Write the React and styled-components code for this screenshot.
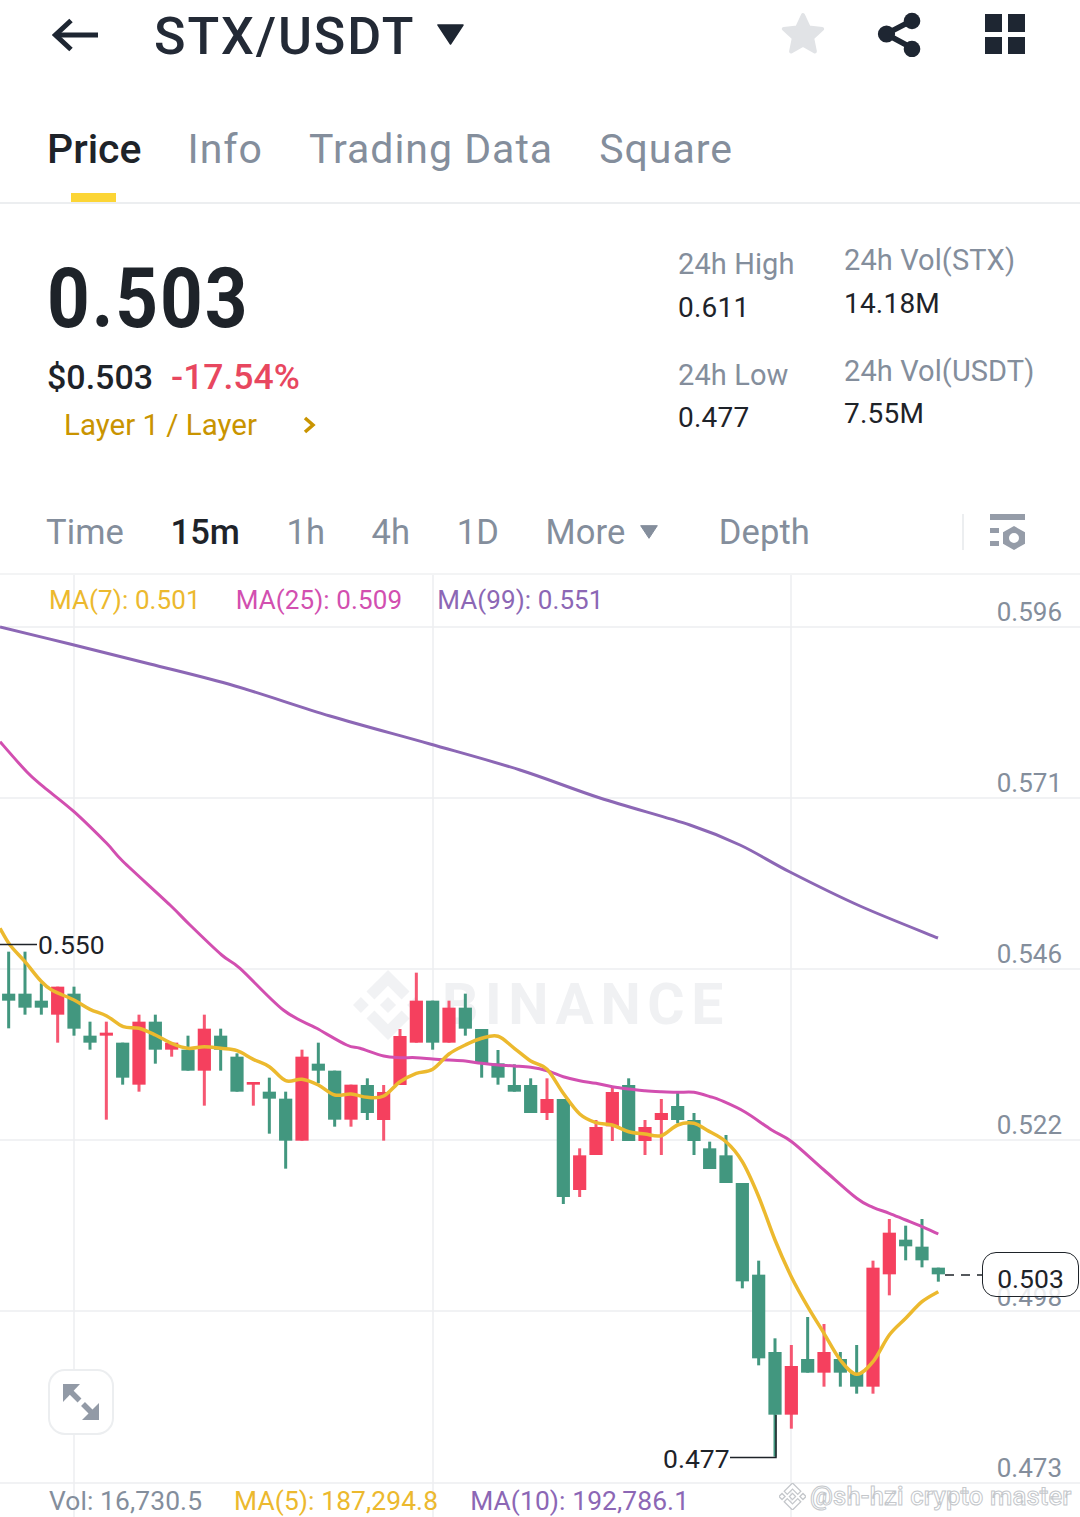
import React from "react";
import styled, { createGlobalStyle } from "styled-components";

const DARK = "#1e2329";
const GRAY = "#848e9c";
const LINE = "#eceef0";
const GREEN = "#42977f";
const RED = "#f5405e";
const YELLOW = "#ecb92e";
const PINK = "#d24fb0";
const PURPLE = "#8c67b5";
const FONT = `Roboto, "Noto Sans", sans-serif`;

const Global = createGlobalStyle`
  html, body { margin: 0; padding: 0; background: #fff; }
  body { font-family: ${FONT}; color: ${DARK}; }
  #root { width: 1080px; height: 1517px; overflow: hidden; }
`;

const Page = styled.div`
  width: 1080px;
  height: 1517px;
  display: flex;
  flex-direction: column;
  overflow: hidden;
  background: #fff;
`;

/* ---------- header ---------- */
const Header = styled.header`
  height: 72px;
  display: flex;
  align-items: center;
  padding: 0 55px 4px 52px;
  box-sizing: border-box;
`;
const Title = styled.h1`
  margin: 6px 0 0 56px;
  font-size: 52px;
  line-height: 66px;
  font-weight: 500;
  letter-spacing: 1.9px;
  color: #232a36;
`;
const HeaderIcons = styled.div`
  margin-left: auto;
  display: flex;
  align-items: center;
  gap: 51px;
`;
const Svg = styled.svg`
  display: block;
  flex: none;
`;
const BackIcon = styled(Svg)`
  margin-top: 2px;
`;
const GridIcon = styled(Svg)`
  margin-left: 13px;
`;
const TitleCaret = styled.span`
  margin: 0 0 0 22px;
`;

/* ---------- tabs ---------- */
const Tabs = styled.nav`
  height: 132px;
  display: flex;
  gap: 46px;
  padding: 0 0 0 47px;
  border-bottom: 2px solid ${LINE};
  box-sizing: border-box;
`;
const Tab = styled.a`
  position: relative;
  padding-top: 50px;
  font-size: 41px;
  line-height: 54px;
  font-weight: ${(p) => (p.$active ? 500 : 400)};
  letter-spacing: ${(p) => (p.$active ? 0 : 1)}px;
  color: ${(p) => (p.$active ? DARK : GRAY)};
  &::after {
    content: "";
    display: ${(p) => (p.$active ? "block" : "none")};
    position: absolute;
    left: 24px;
    bottom: 0;
    width: 45px;
    height: 9px;
    background: #fcd535;
  }
`;

/* ---------- stats ---------- */
const Stats = styled.section`
  height: 286px;
  display: flex;
  padding: 0 0 0 47px;
  box-sizing: border-box;
`;
const PriceBlock = styled.div`
  width: 631px;
  flex: none;
  display: flex;
  flex-direction: column;
`;
const BigPrice = styled.div`
  margin-top: 49px;
  font-size: 84px;
  line-height: 92px;
  font-weight: 700;
  letter-spacing: 2.2px;
  color: ${DARK};
  transform: scaleX(0.888);
  transform-origin: left center;
`;
const SubPrice = styled.div`
  margin-top: 10px;
  display: flex;
  align-items: baseline;
  gap: 18px;
  font-size: 35.5px;
  line-height: 44px;
  font-weight: 500;
`;
const Fiat = styled.span`
  color: ${DARK};
  font-size: 34px;
`;
const Change = styled.span`
  color: #e8475f;
`;
const LayerLink = styled.div`
  margin: 7px 0 0 17px;
  display: flex;
  align-items: center;
  gap: 45px;
  font-size: 29.5px;
  line-height: 38px;
  color: #c99400;
`;
const StatColumns = styled.div`
  display: flex;
`;
const StatColumn = styled.div`
  width: ${(p) => p.$w}px;
  padding-top: ${(p) => p.$top}px;
  display: flex;
  flex-direction: column;
  gap: 31px;
`;
const Stat = styled.div`
  display: flex;
  flex-direction: column;
  gap: 6.5px;
`;
const StatLabel = styled.span`
  font-size: 29px;
  line-height: 37px;
  color: ${GRAY};
  letter-spacing: 0.1px;
`;
const StatValue = styled.span`
  font-size: 28px;
  line-height: 36px;
  color: ${DARK};
  letter-spacing: 0.2px;
`;

/* ---------- interval row ---------- */
const Intervals = styled.div`
  height: 85px;
  display: flex;
  align-items: center;
  gap: 46.5px;
  padding: 1px 54px 0 46px;
  box-sizing: border-box;
  border-bottom: 2px solid #f3f4f5;
`;
const Interval = styled.span`
  font-size: 34.5px;
  line-height: 44px;
  font-weight: ${(p) => (p.$active ? 500 : 400)};
  color: ${(p) => (p.$active ? DARK : GRAY)};
  letter-spacing: 0.1px;
`;
const MoreGroup = styled.span`
  display: flex;
  align-items: center;
  gap: 14px;
  margin-right: 13px;
`;
const RowEnd = styled.div`
  margin-left: auto;
  display: flex;
  align-items: center;
  gap: 26px;
`;
const Divider = styled.span`
  width: 2px;
  height: 36px;
  background: ${LINE};
`;

/* ---------- chart ---------- */
const Chart = styled.section`
  position: relative;
  flex: 1;
  display: flex;
  flex-direction: column;
  justify-content: space-between;
  overflow: hidden;
`;
const ChartCanvas = styled.svg`
  position: absolute;
  left: 0;
  top: 0;
`;
const Legend = styled.div`
  position: relative;
  height: 50px;
  display: flex;
  align-items: center;
  gap: 35px;
  padding-left: 49px;
  font-size: 26px;
  letter-spacing: 0.1px;
`;
const VolumeLegend = styled(Legend)`
  height: 32px;
  gap: 32px;
  font-size: 26.4px;
`;
const LegendItem = styled.span`
  color: ${(p) => p.$color};
`;
const AxisLabel = styled.span`
  position: absolute;
  right: 18px;
  top: ${(p) => p.$top}px;
  font-size: 26px;
  line-height: 32px;
  color: ${GRAY};
`;
const PriceTag = styled.div`
  position: absolute;
  left: 982px;
  top: 677px;
  width: 97px;
  height: 45px;
  box-sizing: border-box;
  border: 1.5px solid ${DARK};
  border-radius: 14px;
  background: rgba(255, 255, 255, 0.82);
  text-align: center;
  font-size: 26.5px;
  line-height: 51px;
  color: ${DARK};
`;
const ExtremeLabel = styled.span`
  position: absolute;
  left: ${(p) => p.$left}px;
  top: ${(p) => p.$top}px;
  font-size: 26.5px;
  line-height: 32px;
  color: ${DARK};
`;
const ExpandButton = styled.button`
  position: absolute;
  left: 48px;
  top: 794px;
  width: 66px;
  height: 66px;
  padding: 0;
  box-sizing: border-box;
  display: flex;
  align-items: center;
  justify-content: center;
  background: #fff;
  border: 2px solid ${LINE};
  border-radius: 17px;
`;
const WatermarkLogo = styled.svg`
  position: absolute;
  left: 353px;
  top: 395px;
`;
const WatermarkText = styled.span`
  position: absolute;
  left: 442px;
  top: 395px;
  font-size: 57px;
  line-height: 70px;
  font-weight: 700;
  letter-spacing: 6.6px;
  color: #f0f1f3;
`;
const CreditLogo = styled.svg`
  position: absolute;
  left: 779px;
  top: 908px;
`;
const CreditText = styled.span`
  position: absolute;
  left: 810px;
  top: 907px;
  font-size: 25.5px;
  line-height: 28px;
  font-weight: 500;
  letter-spacing: 0.2px;
  color: #fff;
  -webkit-text-stroke: 1px #c4c7cb;
  white-space: nowrap;
`;

/* ---------- chart data (page coordinates) ---------- */
const g = "g";
const r = "r";
const from = (ox, oy, rows) =>
  rows.map(([c, u, wt, wb, bt, bb]) => ({
    c,
    x: ox + u / 3,
    wt: oy + wt / 3,
    wb: oy + wb / 3,
    bt: oy + bt / 3,
    bb: oy + bb / 3,
  }));

const candles = [
  ...from(0, 920, [
    [g, 26, 95, 325, 221, 242],
    [g, 75, 95, 284, 221, 263],
    [g, 124, 190, 284, 242, 263],
    [r, 173, 200, 368, 200, 284],
    [g, 222, 200, 347, 221, 326],
    [g, 270, 305, 389, 347, 368],
    [r, 319, 305, 599, 338, 347],
    [g, 368, 368, 494, 368, 473],
    [r, 417, 284, 515, 305, 494],
    [g, 466, 284, 431, 305, 389],
    [r, 515, 368, 410, 368, 389],
    [g, 564, 347, 452, 389, 452],
    [r, 613, 284, 557, 326, 452],
    [g, 662, 326, 452, 347, 389],
    [g, 711, 400, 515, 410, 515],
    [r, 760, 486, 557, 486, 494],
    [g, 808, 473, 641, 515, 536],
    [g, 857, 515, 746, 536, 662],
    [r, 906, 389, 662, 410, 662],
    [g, 955, 368, 490, 431, 452],
    [g, 1004, 452, 620, 452, 599],
    [r, 1053, 494, 620, 494, 599],
  ]),
  ...from(360, 960, [
    [g, 22, 355, 480, 375, 459],
    [r, 71, 375, 542, 396, 480],
    [r, 120, 207, 375, 228, 375],
    [r, 169, 38, 248, 122, 248],
    [g, 218, 122, 269, 122, 248],
    [r, 267, 122, 248, 143, 248],
    [g, 316, 101, 227, 143, 206],
    [g, 365, 207, 353, 207, 310],
    [g, 414, 270, 374, 310, 353],
    [g, 463, 313, 395, 375, 395],
    [g, 512, 355, 459, 375, 459],
    [r, 561, 355, 480, 417, 459],
    [g, 610, 417, 732, 417, 711],
    [r, 659, 565, 711, 586, 690],
    [r, 708, 480, 585, 501, 585],
    [r, 757, 380, 543, 396, 499],
    [g, 806, 355, 543, 375, 543],
    [r, 855, 480, 585, 501, 543],
    [r, 904, 417, 585, 459, 480],
    [g, 953, 396, 490, 438, 480],
    [g, 1002, 459, 585, 480, 543],
  ]),
  ...from(700, 1130, [
    [g, 29, 35, 117, 55, 117],
    [g, 78, 15, 159, 76, 159],
    [g, 127, 159, 475, 159, 454],
    [g, 176, 392, 706, 434, 685],
    [g, 225, 625, 980, 666, 854],
    [r, 274, 645, 896, 708, 854],
    [g, 323, 561, 728, 687, 728],
    [r, 372, 582, 770, 666, 728],
    [g, 421, 666, 770, 687, 728],
    [g, 470, 645, 791, 729, 770],
    [r, 519, 392, 791, 413, 770],
    [r, 568, 267, 496, 308, 433],
    [g, 617, 287, 391, 329, 349],
    [g, 666, 267, 412, 350, 391],
    [g, 715, 413, 455, 413, 433],
  ]),
];

const pts = (ox, oy, rows) => rows.map(([u, v]) => [ox + u / 3, oy + v / 3]);

const ma7 = [
  ...pts(0, 920, [
    [0, 25], [30, 75], [75, 125], [120, 180], [155, 210], [222, 240], [270, 268], [320, 288],
    [370, 320], [417, 325], [466, 345], [515, 370], [564, 385], [613, 380], [662, 385], [711, 392],
    [760, 418], [808, 440], [857, 482], [906, 478], [955, 495], [1004, 525], [1053, 522],
  ]),
  ...pts(360, 960, [
    [22, 412], [71, 408], [120, 365], [169, 340], [218, 328], [267, 282], [316, 255], [365, 235],
    [414, 229], [463, 265], [512, 303], [561, 328], [610, 400], [659, 462], [708, 488], [757, 495],
    [806, 515], [855, 522], [904, 527], [953, 495], [1002, 490],
  ]),
  ...pts(700, 1130, [
    [20, 0], [78, 35], [127, 95], [176, 200], [225, 330], [274, 440], [323, 530], [372, 610],
    [421, 690], [470, 733], [519, 695], [568, 615], [617, 565], [666, 515], [715, 485],
  ]),
];

const ma25 = [
  ...pts(0, 730, [
    [0, 35], [80, 125], [130, 170], [222, 245], [320, 340], [370, 395], [510, 525], [570, 585], [665, 675],
  ]),
  ...pts(0, 920, [[720, 145], [850, 270], [950, 325], [1040, 375]]),
  ...pts(360, 960, [
    [0, 265], [71, 288], [120, 293], [169, 293], [218, 297], [267, 300], [316, 303], [365, 310],
    [414, 315], [463, 318], [512, 322], [561, 332], [610, 350], [659, 362], [708, 370], [757, 380],
    [806, 387], [855, 392], [904, 395], [953, 397], [1002, 397], [1051, 410], [1080, 420],
  ]),
  [745, 1112],
  ...pts(700, 1130, [[215, 0], [275, 35], [372, 120], [470, 205], [519, 232], [568, 250], [617, 270], [666, 290], [715, 312]]),
];

const ma99 = [
  [0, 627], [70, 644], [150, 664], [235, 686], [330, 716], [430, 744], [520, 770], [600, 798],
  [690, 825], [740, 845], [790, 872], [860, 906], [938, 938],
];

const CHART_TOP = 575;
const smooth = (p) => {
  let d = `M${p[0][0]} ${p[0][1] - CHART_TOP}`;
  for (let i = 0; i < p.length - 1; i++) {
    const a = p[Math.max(i - 1, 0)];
    const b = p[i];
    const c = p[i + 1];
    const e = p[Math.min(i + 2, p.length - 1)];
    const c1x = b[0] + (c[0] - a[0]) / 6;
    const c1y = b[1] + (c[1] - a[1]) / 6 - CHART_TOP;
    const c2x = c[0] - (e[0] - b[0]) / 6;
    const c2y = c[1] - (e[1] - b[1]) / 6 - CHART_TOP;
    d += `C${c1x.toFixed(1)} ${c1y.toFixed(1)} ${c2x.toFixed(1)} ${c2y.toFixed(1)} ${c[0].toFixed(1)} ${(c[1] - CHART_TOP).toFixed(1)}`;
  }
  return d;
};

const BINANCE_MARK =
  "M38.73 53.2l24.59-24.58 24.6 24.6 14.3-14.31L63.32 0 24.42 38.9zM0 63.31l14.3-14.31 14.31 14.31-14.31 14.3zM38.73 73.41l24.59 24.59 24.6-24.6 14.31 14.29-38.9 38.91-38.91-38.88-.02-.02zM98 63.31l14.3-14.31 14.31 14.3-14.31 14.32zM77.83 63.3L63.32 48.78 52.59 59.51l-1.24 1.23-2.54 2.54 14.51 14.5 14.51-14.47z";

const gridY = [627, 798, 969, 1140, 1311, 1483];
const gridX = [74, 433, 791];
const axis = [
  ["0.596", 612],
  ["0.571", 783],
  ["0.546", 954],
  ["0.522", 1125],
  ["0.498", 1297],
  ["0.473", 1468],
];

const Caret = ({ w, h, fill }) => (
  <svg width={w} height={h} viewBox="0 0 27 21" style={{ display: "block" }}>
    <path d="M1 1h25L13.500 20z" fill={fill} stroke={fill} strokeLinejoin="round" strokeWidth="1.500" />
  </svg>
);

export default function App() {
  return (
    <Page>
      <Global />
      <Header>
        <BackIcon width="46" height="34" viewBox="0 0 46 34" fill="none" stroke="#1e2632" strokeWidth="5">
          <path d="M46 17H4" />
          <path d="M19 2.500L3.500 17 19 31.500" />
        </BackIcon>
        <Title>STX/USDT</Title>
        <TitleCaret>
          <Caret w={27} h={21} fill="#1e2632" />
        </TitleCaret>
        <HeaderIcons>
          <Svg width="46" height="46" viewBox="0 0 46 46">
            <path
              d="M23 4l5.700 12.400 13.500 1.500-10 9.200 2.700 13.400L23 33.800l-11.900 6.700 2.700-13.400-10-9.200 13.500-1.500z"
              fill="#e1e3e6"
              stroke="#e1e3e6"
              strokeWidth="4"
              strokeLinejoin="round"
            />
          </Svg>
          <Svg width="44" height="46" viewBox="0 0 44 46" fill="#1e2632" stroke="#1e2632">
            <path d="M35 9.500L9 23l26 14" fill="none" strokeWidth="5.500" />
            <circle cx="35" cy="10" r="8.300" stroke="none" />
            <circle cx="9.500" cy="23" r="8.600" stroke="none" />
            <circle cx="35" cy="38" r="8.300" stroke="none" />
          </Svg>
          <GridIcon width="40" height="40" viewBox="0 0 40 40" fill="#1e2632">
            <rect x="0" y="0" width="17" height="18" />
            <rect x="23" y="0" width="17" height="18" />
            <rect x="0" y="23" width="17" height="17" />
            <rect x="23" y="23" width="17" height="17" />
          </GridIcon>
        </HeaderIcons>
      </Header>

      <Tabs>
        <Tab $active>Price</Tab>
        <Tab>Info</Tab>
        <Tab>Trading Data</Tab>
        <Tab>Square</Tab>
      </Tabs>

      <Stats>
        <PriceBlock>
          <BigPrice>0.503</BigPrice>
          <SubPrice>
            <Fiat>$0.503</Fiat>
            <Change>-17.54%</Change>
          </SubPrice>
          <LayerLink>
            <span>Layer 1 / Layer</span>
            <Svg width="14" height="18" viewBox="0 0 14 18" fill="none" stroke="#c99400" strokeWidth="3.500">
              <path d="M3 2l8 7-8 7" />
            </Svg>
          </LayerLink>
        </PriceBlock>
        <StatColumns>
          <StatColumn $w={166} $top={42}>
            <Stat>
              <StatLabel>24h High</StatLabel>
              <StatValue>0.611</StatValue>
            </Stat>
            <Stat>
              <StatLabel>24h Low</StatLabel>
              <StatValue>0.477</StatValue>
            </Stat>
          </StatColumn>
          <StatColumn $w={220} $top={38}>
            <Stat>
              <StatLabel>24h Vol(STX)</StatLabel>
              <StatValue>14.18M</StatValue>
            </Stat>
            <Stat>
              <StatLabel>24h Vol(USDT)</StatLabel>
              <StatValue>7.55M</StatValue>
            </Stat>
          </StatColumn>
        </StatColumns>
      </Stats>

      <Intervals>
        <Interval>Time</Interval>
        <Interval $active>15m</Interval>
        <Interval>1h</Interval>
        <Interval>4h</Interval>
        <Interval>1D</Interval>
        <MoreGroup>
          <Interval>More</Interval>
          <Caret w={20} h={14} fill={GRAY} />
        </MoreGroup>
        <Interval>Depth</Interval>
        <RowEnd>
          <Divider />
          <Svg width="36" height="36" viewBox="0 0 36 36" fill="#959ca8">
            <rect x="0" y="0" width="35" height="6" />
            <rect x="0" y="14" width="9" height="5" />
            <rect x="0" y="27" width="9" height="5" />
            <path fillRule="evenodd" d="M24 12l11 6.200v11.600L24 36l-11-6.200V18.200zM24 19a5 5 0 1 0 0 10 5 5 0 0 0 0-10z" />
          </Svg>
        </RowEnd>
      </Intervals>

      <Chart>
        <WatermarkLogo width="70" height="70" viewBox="0 0 126.61 126.61" fill="#f1f2f4">
          <path d={BINANCE_MARK} />
        </WatermarkLogo>
        <WatermarkText>BINANCE</WatermarkText>
        <ChartCanvas width="1080" height="942" viewBox="0 0 1080 942">
          {gridY.map((y) => (
            <line key={y} x1="0" x2="1080" y1={y - CHART_TOP} y2={y - CHART_TOP} stroke={LINE} strokeWidth="1.500" />
          ))}
          {gridX.map((x) => (
            <line key={x} x1={x} x2={x} y1="0" y2="942" stroke={LINE} strokeWidth="1.500" />
          ))}
          {candles.map((k, i) => (
            <g key={i} fill={k.c === g ? GREEN : RED}>
              <rect x={k.x - 1.5} y={k.wt - CHART_TOP} width="3" height={k.wb - k.wt} opacity={k.c === g ? 1 : 0.88} />
              <rect x={k.x - 6.6} y={k.bt - CHART_TOP} width="13.200" height={k.bb - k.bt} />
            </g>
          ))}
          <path d={smooth(ma99)} fill="none" stroke={PURPLE} strokeWidth="3" />
          <path d={smooth(ma25)} fill="none" stroke={PINK} strokeWidth="3" />
          <path d={smooth(ma7)} fill="none" stroke={YELLOW} strokeWidth="3.500" />
          <path d="M0 369.500H37" stroke={DARK} strokeWidth="1.500" />
          <path d="M730 882.500H776V840" fill="none" stroke={DARK} strokeWidth="1.500" />
          <path d="M945 700H982" stroke={DARK} strokeWidth="1.500" strokeDasharray="9 7" />
        </ChartCanvas>

        <Legend>
          <LegendItem $color={YELLOW}>MA(7): 0.501</LegendItem>
          <LegendItem $color={PINK}>MA(25): 0.509</LegendItem>
          <LegendItem $color={PURPLE}>MA(99): 0.551</LegendItem>
        </Legend>

        {axis.map(([t, y]) => (
          <AxisLabel key={t} $top={y - CHART_TOP - 16}>
            {t}
          </AxisLabel>
        ))}
        <PriceTag>0.503</PriceTag>
        <ExtremeLabel $left={38} $top={354}>
          0.550
        </ExtremeLabel>
        <ExtremeLabel $left={663} $top={868}>
          0.477
        </ExtremeLabel>

        <ExpandButton aria-label="Expand chart">
          <Svg width="62" height="62" viewBox="1 1 62 62" fill="#929aa6" stroke="#929aa6">
            <path d="M14 14h17L14 32z" stroke="none" />
            <path d="M22 22l8.500 8.500" strokeWidth="5.500" />
            <path d="M50 50H33l17-17z" stroke="none" />
            <path d="M42 42l-8-8" strokeWidth="5.500" />
          </Svg>
        </ExpandButton>

        <VolumeLegend>
          <LegendItem $color={GRAY}>Vol: 16,730.5</LegendItem>
          <LegendItem $color={YELLOW}>MA(5): 187,294.8</LegendItem>
          <LegendItem $color={PURPLE}>MA(10): 192,786.1</LegendItem>
        </VolumeLegend>

        <CreditLogo width="27" height="27" viewBox="0 0 126.61 126.61" fill="#fff" stroke="#c4c7cb" strokeWidth="6">
          <path d={BINANCE_MARK} />
        </CreditLogo>
        <CreditText>@sh-hzi crypto master</CreditText>
      </Chart>
    </Page>
  );
}
